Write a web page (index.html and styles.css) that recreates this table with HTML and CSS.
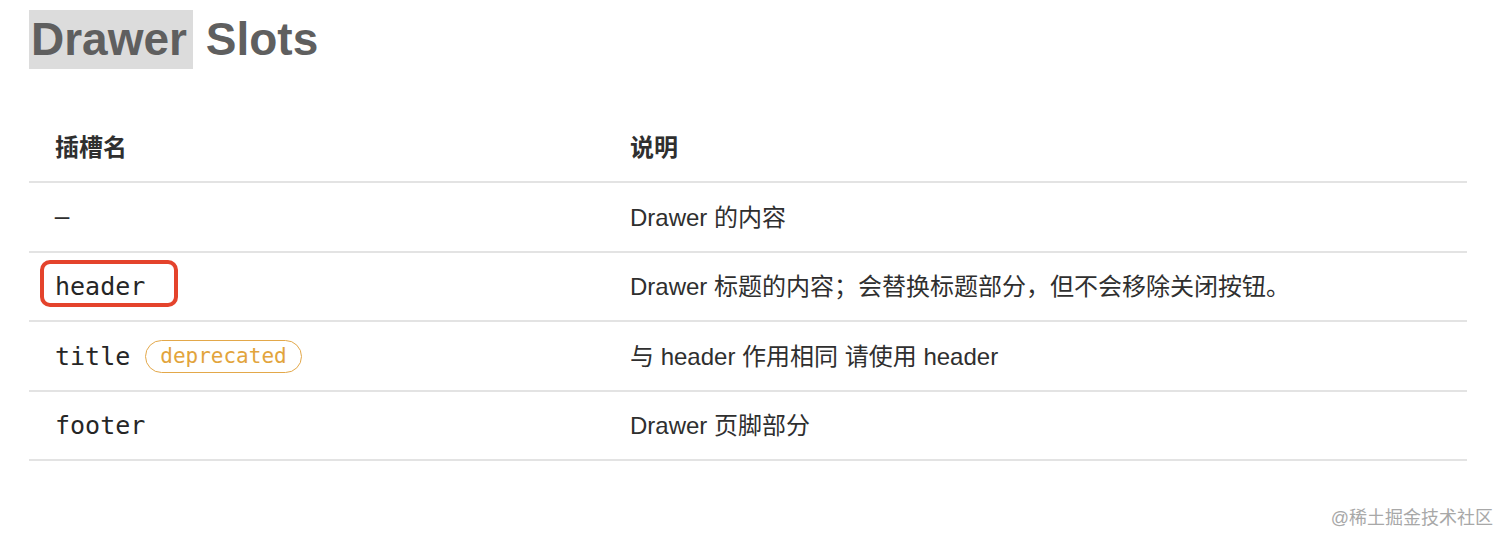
FILE: index.html
```html
<!DOCTYPE html>
<html lang="zh">
<head>
<meta charset="utf-8">
<title>Drawer Slots</title>
<link rel="stylesheet" href="styles.css">
</head>
<body>
<div class="page">
  <h1 class="title"><span class="hl">Drawer</span> Slots</h1>
  <table class="slots">
    <thead>
      <tr><th class="c1"><div class="cell">插槽名</div></th><th><div class="cell">说明</div></th></tr>
    </thead>
    <tbody>
      <tr><td class="c1"><div class="cell"><span class="dash">–</span></div></td><td><div class="cell">Drawer 的内容</div></td></tr>
      <tr><td class="c1"><div class="cell"><span class="code marked">header<span class="ring"></span></span></div></td><td><div class="cell">Drawer 标题的内容；会替换标题部分，但不会移除关闭按钮。</div></td></tr>
      <tr><td class="c1"><div class="cell"><span class="code">title</span><span class="badge">deprecated</span></div></td><td><div class="cell">与 header 作用相同 请使用 header</div></td></tr>
      <tr><td class="c1"><div class="cell"><span class="code">footer</span></div></td><td><div class="cell">Drawer 页脚部分</div></td></tr>
    </tbody>
  </table>
  <div class="watermark">@稀土掘金技术社区</div>
</div>
</body>
</html>
```

FILE: styles.css
```css
html, body {
  margin: 0;
  padding: 0;
  background: #ffffff;
}
.page {
  position: relative;
  width: 1512px;
  height: 545px;
  padding: 10px 0 0 29px;
  box-sizing: border-box;
  font-family: "Liberation Sans", "Noto Sans CJK SC", sans-serif;
  color: #2b2b2b;
}
.title {
  margin: 0 0 44px 0;
  font-size: 46px;
  line-height: 59px;
  height: 59px;
  font-weight: 700;
  color: #5f5f5f;
  font-family: "Liberation Sans", "Noto Sans CJK SC", sans-serif;
}
.hl {
  display: inline-block;
  background: #dcdcdc;
  padding: 0 6px 0 2px;
  line-height: 59px;
}
.slots {
  width: 1438px;
  border-collapse: collapse;
  font-size: 24px;
}
.slots th, .slots td {
  text-align: left;
  padding: 18px 26px 16px 26px;
  border-bottom: 2px solid #e3e3e3;
  vertical-align: middle;
  white-space: nowrap;
}
.slots td {
  padding-top: 17.5px;
  padding-bottom: 16px;
}
.cell {
  display: flex;
  align-items: center;
  height: 34px;
  line-height: 34px;
}
.slots th {
  font-weight: 700;
  color: #2f2f2f;
}
.slots td {
  color: #2f2f2f;
}
.slots .c1 {
  width: 523px;
}
.dash {
  display: inline-block;
  font-size: 25px;
  line-height: 30px;
  margin-top: -4px;
  transform: scaleX(1.05);
}
.code {
  display: inline-block;
  font-family: "DejaVu Sans Mono", "Liberation Mono", monospace;
  font-size: 25px;
  line-height: 30px;
  color: #262626;
}
.marked {
  position: relative;
}
.ring {
  position: absolute;
  left: -15px;
  right: -33px;
  top: -12px;
  bottom: -5px;
  border: 4px solid #e4432c;
  border-radius: 10px;
}
.badge {
  display: inline-block;
  margin-left: 15px;
  padding: 0 14px;
  height: 31px;
  line-height: 31px;
  border: 1.5px solid #e3a84a;
  border-radius: 18px;
  font-family: "DejaVu Sans Mono", "Liberation Mono", monospace;
  font-size: 21px;
  color: #e2a43c;
}
.watermark {
  position: absolute;
  right: 19px;
  top: 505px;
  font-size: 18px;
  line-height: 26px;
  color: #a8a8a8;
  font-family: "Liberation Sans", "Noto Sans CJK SC", sans-serif;
}
```
